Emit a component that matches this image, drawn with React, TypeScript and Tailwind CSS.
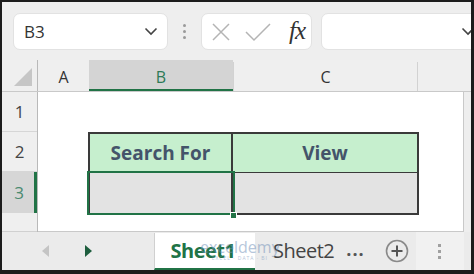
export default function App() {
  return (
    <div className="w-[474px] h-[274px] bg-[#1c1c1c] pt-[2px] pl-[2px] pr-[3px] pb-[4px] font-['Open_Sans',sans-serif]">
      <div className="relative flex flex-col h-full bg-[#eeeeee] overflow-hidden">
        {/* formula bar */}
        <div className="h-[58px] flex items-start pt-[11px] pl-[11px] shrink-0">
          <div className="shrink-0 w-[155px] h-[37px] bg-white rounded-[7px] border border-[#e2e2e2] flex items-center justify-between pl-[10px] pr-[9px]">
            <span className="text-[17px] text-[#333]">B3</span>
            <svg width="14" height="9" viewBox="0 0 14 9">
              <path d="M1.5 1.5 L7 7 L12.5 1.5" fill="none" stroke="#444" strokeWidth="1.6" />
            </svg>
          </div>
          <div className="shrink-0 w-[33px] h-[37px] flex flex-col items-center justify-center gap-[3px]">
            <span className="w-[3px] h-[3px] rounded-full bg-[#9a9a9a]" />
            <span className="w-[3px] h-[3px] rounded-full bg-[#9a9a9a]" />
            <span className="w-[3px] h-[3px] rounded-full bg-[#9a9a9a]" />
          </div>
          <div className="shrink-0 w-[111px] h-[37px] bg-white rounded-[7px] border border-[#e2e2e2] flex items-center pl-[8px] pr-[6px]">
            <svg width="22" height="22" viewBox="0 0 22 22">
              <path d="M3 3 L19 19 M19 3 L3 19" stroke="#b4b4b4" strokeWidth="1.5" />
            </svg>
            <svg width="28" height="22" viewBox="0 0 28 22" className="ml-[12px]">
              <path d="M2 11 L10 19 L26 3" fill="none" stroke="#b4b4b4" strokeWidth="1.5" />
            </svg>
            <span className="ml-auto font-['Liberation_Serif',serif] italic text-[25px] leading-none text-[#333] tracking-[-1px] pb-[2px]">fx</span>
          </div>
          <div className="shrink-0 ml-[9px] w-[170px] h-[37px] bg-white rounded-l-[7px] border border-[#e2e2e2] flex items-center justify-end pr-[15px]">
            <svg width="14" height="9" viewBox="0 0 14 9">
              <path d="M1.5 1.5 L7 7 L12.5 1.5" fill="none" stroke="#444" strokeWidth="1.6" />
            </svg>
          </div>
        </div>

        {/* column headers */}
        <div className="h-[32px] flex shrink-0 border-b border-[#c9c9c9] bg-[#efefef]">
          <div className="w-[36px] flex items-end justify-end pr-[5px] pb-[5px] border-r border-[#b9b9b9]">
            <svg width="18" height="18" viewBox="0 0 18 18">
              <path d="M18 0 L18 18 L0 18 Z" fill="#c6c6c6" />
            </svg>
          </div>
          <div className="w-[51px] flex items-center justify-center text-[16px] text-[#333] pt-[2px]">A</div>
          <div className="w-[144px] flex items-center justify-center text-[16px] text-[#2d7a57] bg-[#d4d4d4] border-b-2 border-[#217346] pt-[4px]">B</div>
          <div className="w-[185px] flex items-center justify-center text-[16px] text-[#333] border-l border-r border-[#d2d2d2] mt-[2px]">C</div>
          <div className="flex-1" />
        </div>

        {/* body */}
        <div className="h-[140px] flex shrink-0">
          <div className="w-[36px] flex flex-col border-r border-[#b9b9b9] bg-[#efefef]">
            <div className="h-[40px] flex items-center justify-center text-[17px] text-[#444] border-b border-[#d6d6d6]">1</div>
            <div className="h-[40px] flex items-center justify-center text-[17px] text-[#444] border-b border-[#d6d6d6]">2</div>
            <div className="h-[41px] flex items-center justify-center text-[17px] text-[#4a8a70] bg-[#d6d6d6] border-r-[3px] border-[#217346] pl-[2px]">3</div>
            <div className="flex-1 border-b border-[#d0d0d0]" />
          </div>
          <div className="w-[426px] bg-white border-r border-b border-[#c9c9c9] flex flex-col">
            <div className="h-[40px]" />
            <div className="ml-[50px] w-[331px] border-2 border-[#3a3a3a] flex flex-col">
              <div className="h-[38px] flex bg-[#c6efce]">
                <div className="w-[143px] border-r-2 border-[#3a3a3a] flex items-center justify-center text-[19px] font-bold text-[#44546a]">
                  Search For
                </div>
                <div className="flex-1 flex items-center justify-center text-[19px] font-bold text-[#44546a]">View</div>
              </div>
              <div className="h-[41px] flex bg-[#e3e3e3] border-t border-[#3a3a3a]">
                <div className="relative w-[143px] border-r-2 border-[#3a3a3a]">
                  <div className="absolute left-[-3px] top-[-2px] w-[148px] h-[44px] border-2 border-[#217346]" />
                  <div className="absolute right-[-6px] bottom-[-6px] w-[7px] h-[7px] bg-[#217346] border border-white" />
                </div>
                <div className="flex-1" />
              </div>
            </div>
          </div>
          <div className="flex-1" />
        </div>

        {/* sheet tabs */}
        <div className="flex-1 flex items-stretch bg-[#ebebeb]">
          <div className="w-[152px] flex items-center">
            <svg width="7" height="12" viewBox="0 0 7 12" className="ml-[40px]">
              <path d="M7 0 L0 6 L7 12 Z" fill="#c4c4c4" />
            </svg>
            <svg width="7" height="12" viewBox="0 0 7 12" className="ml-[36px]">
              <path d="M0 0 L7 6 L0 12 Z" fill="#1e5e3e" />
            </svg>
          </div>
          <div className="w-[101px] mt-[1px] bg-white border-l border-[#d0d0d0] border-b-2 border-b-[#217346] flex items-center justify-center pr-[4px] text-[20px] font-bold text-[#217346] tracking-[-0.5px]">
            Sheet1
          </div>
          <div className="ml-[18px] flex items-center text-[20px] text-[#444] tracking-[-0.5px]">Sheet2</div>
          <div className="ml-[12px] flex items-center text-[18px] font-bold text-[#555] pb-[4px] tracking-[1px]">...</div>
          <div className="ml-[20px] flex items-center">
            <svg width="24" height="24" viewBox="0 0 24 24">
              <circle cx="12" cy="12" r="10.5" fill="none" stroke="#8a8a8a" strokeWidth="1.6" />
              <path d="M12 6.5 V17.5 M6.5 12 H17.5" stroke="#555" strokeWidth="2" />
            </svg>
          </div>
          <div className="ml-[7px] w-[48px] bg-[#f1f1f1] flex flex-col items-center justify-center gap-[3px]">
            <span className="w-[3px] h-[3px] bg-[#a0a0a0]" />
            <span className="w-[3px] h-[3px] bg-[#a0a0a0]" />
            <span className="w-[3px] h-[3px] bg-[#a0a0a0]" />
          </div>
          <div className="flex-1" />
        </div>

        {/* watermark */}
        <div className="absolute left-[198px] top-[237px] flex flex-col items-center leading-none pointer-events-none">
          <span className="text-[16px] text-[#6f8fb8] opacity-50">exceldemy</span>
          <span className="text-[5px] text-[#6f8fb8] opacity-50 tracking-[1px] mt-[1px]">EXCEL · DATA · BI</span>
        </div>
      </div>
    </div>
  )
}
